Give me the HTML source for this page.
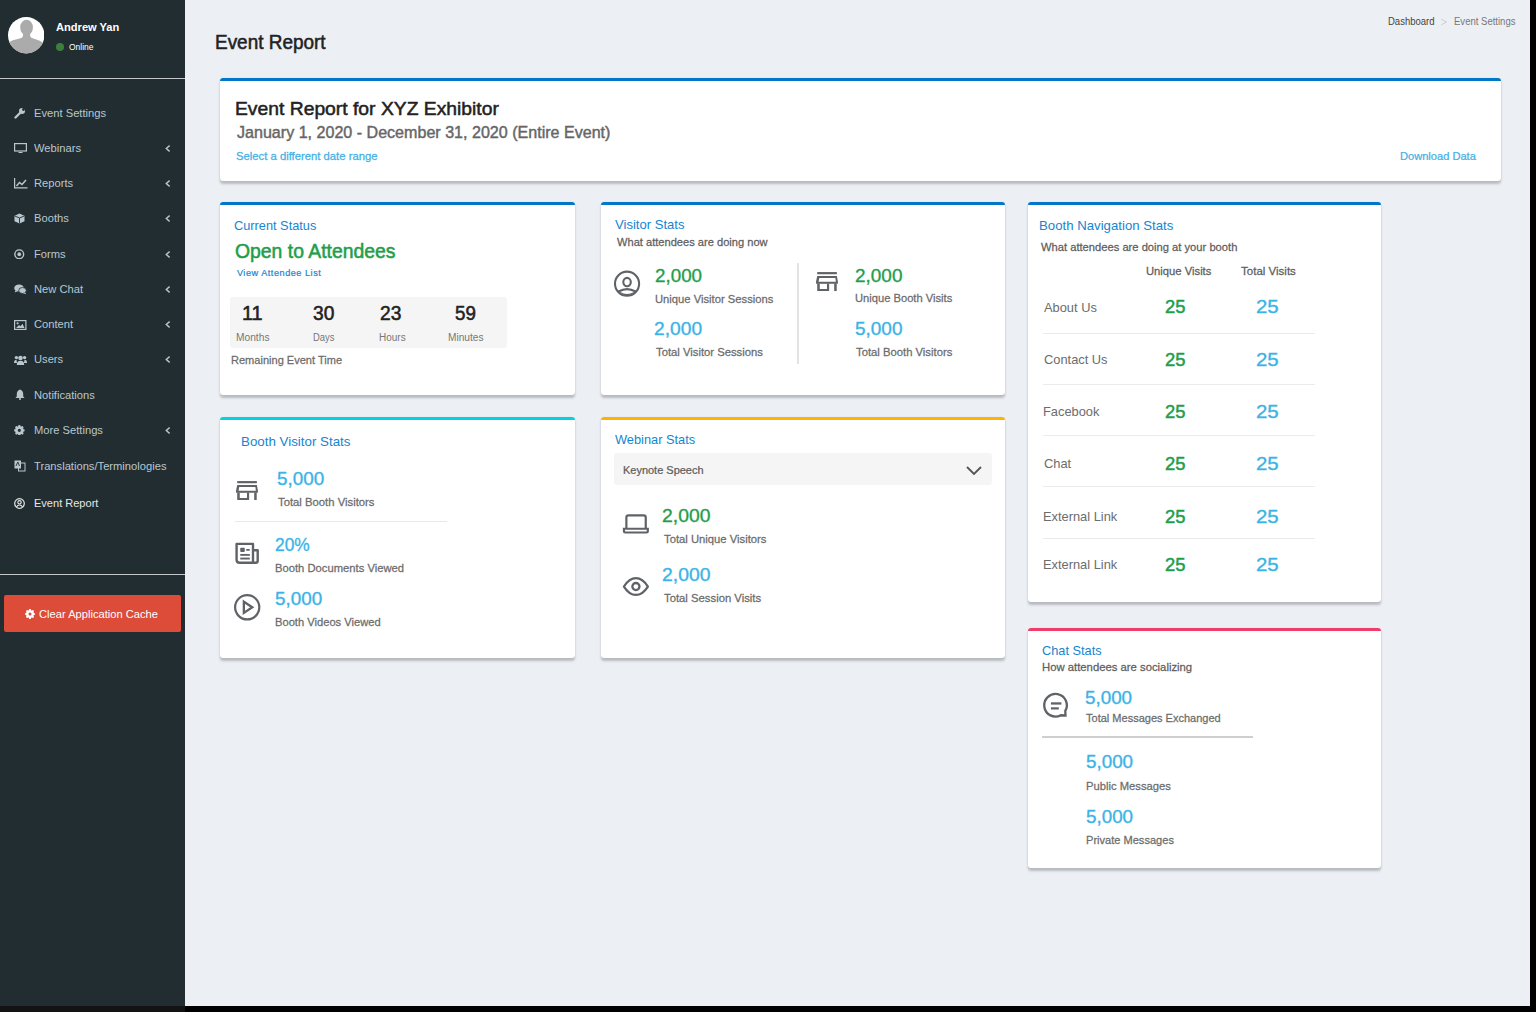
<!DOCTYPE html>
<html><head><meta charset="utf-8"><title>Event Report</title>
<style>
html,body{margin:0;padding:0;width:1536px;height:1012px;overflow:hidden;background:#000;}
body{position:relative;font-family:"Liberation Sans",sans-serif;}
.t{position:absolute;white-space:nowrap;transform-origin:0 0;}
.card{position:absolute;background:#fff;border-radius:3px;box-shadow:0 0 1px rgba(0,0,0,.12),0 2.5px 2.5px rgba(0,0,0,.22);overflow:hidden;}
.cb{position:absolute;left:0;top:0;right:0;height:3.4px;}
</style></head><body>
<div style="position:absolute;left:0;top:0;width:1536px;height:1012px;background:#000"></div>
<div style="position:absolute;left:0;top:1006px;width:185px;height:6px;background:#131313"></div>
<div style="position:absolute;left:185px;top:0;width:1345px;height:1006px;background:#ecf0f5"></div>
<div style="position:absolute;left:0;top:0;width:185px;height:1006px;background:#222d32"></div>
<div style="position:absolute;left:0;top:78px;width:185px;height:1px;background:#c3c6c8"></div>
<div style="position:absolute;left:0;top:574px;width:185px;height:1px;background:#c3c6c8"></div>
<svg style="position:absolute;left:7.85px;top:17.3px;width:36.4px;height:36.4px;" viewBox="0 0 100 100"><defs><clipPath id="av"><circle cx="50" cy="50" r="50"/></clipPath></defs><circle cx="50" cy="50" r="50" fill="#fff"/><g clip-path="url(#av)" fill="#ababab"><ellipse cx="51" cy="29" rx="17.5" ry="21.5"/><path d="M41 40 H61 V56 H41 Z"/><path d="M0 100 V70 Q12 63 30 59.5 Q40 57.5 42 52 H60 Q62 57.5 72 60 Q90 65 100 73 V100 Z"/></g></svg>
<div style="position:absolute;left:56px;top:42.5px;width:8px;height:8px;border-radius:50%;background:#3b7f3d"></div>
<div style="position:absolute;left:3.7px;top:595px;width:177.5px;height:36.5px;background:#dd4b39;border-radius:2px"></div>
<div class="card" style="left:220px;top:78px;width:1281px;height:102.5px"><div class="cb" style="background:#0277c8"></div></div>
<div class="card" style="left:220px;top:202px;width:355px;height:193px"><div class="cb" style="background:#0277c8"></div></div>
<div class="card" style="left:601px;top:202px;width:404px;height:193px"><div class="cb" style="background:#0277c8"></div></div>
<div class="card" style="left:1027.5px;top:202px;width:353.5px;height:400px"><div class="cb" style="background:#0277c8"></div></div>
<div class="card" style="left:220px;top:417px;width:354.5px;height:241px"><div class="cb" style="background:#00d3df"></div></div>
<div class="card" style="left:601px;top:417px;width:404px;height:241px"><div class="cb" style="background:#ffb300"></div></div>
<div class="card" style="left:1027.5px;top:627.5px;width:353.5px;height:240.5px"><div class="cb" style="background:#ee3d6a"></div></div>
<div style="position:absolute;left:230.3px;top:297.2px;width:276.4px;height:51.3px;background:#f5f5f5;border-radius:3px"></div>
<div style="position:absolute;left:797px;top:263px;width:2px;height:101px;background:#e3e3e3"></div>
<div style="position:absolute;left:1043.3px;top:332.6px;width:272.2px;height:1px;background:#eaebed"></div>
<div style="position:absolute;left:1043.3px;top:384.0px;width:272.2px;height:1px;background:#eaebed"></div>
<div style="position:absolute;left:1043.3px;top:434.8px;width:272.2px;height:1px;background:#eaebed"></div>
<div style="position:absolute;left:1043.3px;top:486.2px;width:272.2px;height:1px;background:#eaebed"></div>
<div style="position:absolute;left:1043.3px;top:538.1px;width:272.2px;height:1px;background:#eaebed"></div>
<div style="position:absolute;left:235.4px;top:520.6px;width:211.7px;height:1px;background:#e8e9eb"></div>
<div style="position:absolute;left:614px;top:453.2px;width:377.5px;height:32.2px;background:#f5f5f5;border-radius:3px"></div>
<svg style="position:absolute;left:966px;top:466px;width:16px;height:9.5px;" viewBox="0 0 16 9.5"><path d="M1 1 L8 8 L15 1" fill="none" stroke="#555" stroke-width="1.8"/></svg>
<div style="position:absolute;left:1042px;top:736.2px;width:211.3px;height:2px;background:#cfcfcf"></div>
<svg style="position:absolute;left:610px;top:267px;width:34px;height:34px;" viewBox="0 0 34 34"><circle cx="17.05" cy="16.7" r="12.05" fill="none" stroke="#5f6368" stroke-width="2.1"/><ellipse cx="17.05" cy="15.05" rx="3.75" ry="4.15" fill="none" stroke="#5f6368" stroke-width="2.1"/><defs><clipPath id="pc"><circle cx="17.05" cy="16.7" r="11.5"/></clipPath></defs><g clip-path="url(#pc)"><path d="M0 34 V23.6 H8.0 Q17.05 18.4 26.1 23.6 H34 V34 Z" fill="#5f6368"/><path d="M10.1 25.05 Q17.05 21.35 24.0 25.05 Q17.05 28.75 10.1 25.05 Z" fill="#fff"/></g></svg>
<svg style="position:absolute;left:809.75px;top:264.94px;width:34px;height:34px;" viewBox="0 0 34 34"><path fill="#5f6368" fill-rule="evenodd" d="M7.22 7.06 H26.88 V9.24 H7.22 Z"/><path fill="#5f6368" fill-rule="evenodd" d="M7.22 10.92 H26.88 L27.9 16.6 V18.65 H6.05 V16.6 Z M9.24 12.94 L8.57 16.63 H25.87 L25.37 12.94 Z"/><path fill="#5f6368" fill-rule="evenodd" d="M7.22 18.4 H19.15 V26.04 H7.22 Z M9.74 18.65 V24.03 H16.97 V18.65 Z"/><path fill="#5f6368" fill-rule="evenodd" d="M24.19 18.4 H26.71 V26.04 H24.19 Z"/></svg>
<svg style="position:absolute;left:230.35px;top:473.54px;width:34px;height:34px;" viewBox="0 0 34 34"><path fill="#5f6368" fill-rule="evenodd" d="M7.22 7.06 H26.88 V9.24 H7.22 Z"/><path fill="#5f6368" fill-rule="evenodd" d="M7.22 10.92 H26.88 L27.9 16.6 V18.65 H6.05 V16.6 Z M9.24 12.94 L8.57 16.63 H25.87 L25.37 12.94 Z"/><path fill="#5f6368" fill-rule="evenodd" d="M7.22 18.4 H19.15 V26.04 H7.22 Z M9.74 18.65 V24.03 H16.97 V18.65 Z"/><path fill="#5f6368" fill-rule="evenodd" d="M24.19 18.4 H26.71 V26.04 H24.19 Z"/></svg>
<svg style="position:absolute;left:230px;top:537px;width:34px;height:34px;" viewBox="0 0 34 34"><g fill="none" stroke="#5f6368" stroke-width="2.4" stroke-linejoin="round"><path d="M6.58 6.91 H23.0 V25.68 H9.58 Q6.58 25.68 6.58 22.68 Z"/><path d="M23.0 13.3 H27.7 V23.68 Q27.7 25.68 25.7 25.68 H23.0"/></g><g fill="#5f6368"><rect x="10.25" y="10.75" width="4.53" height="4.37" rx="0.8"/><rect x="16.13" y="12.1" width="3.7" height="1.68" rx="0.5"/><rect x="10.25" y="16.97" width="9.58" height="1.85"/><rect x="10.25" y="20.6" width="9.58" height="1.9"/></g></svg>
<svg style="position:absolute;left:230px;top:590px;width:34px;height:34px;" viewBox="0 0 34 34"><circle cx="17.2" cy="17.3" r="12.1" fill="none" stroke="#5f6368" stroke-width="2.2"/><path d="M13.85 11.7 L22.3 17.3 L13.85 22.9 Z" fill="none" stroke="#5f6368" stroke-width="2.3" stroke-linejoin="miter"/></svg>
<svg style="position:absolute;left:619px;top:507px;width:34px;height:34px;" viewBox="0 0 34 34"><g fill="none" stroke="#5f6368" stroke-width="2.2"><path d="M7.37 21.5 V10.4 Q7.37 8.37 9.4 8.37 H24.7 Q26.75 8.37 26.75 10.4 V21.5"/><path d="M4.96 21.75 H28.8 V24.1 Q28.8 25.5 27.4 25.5 H6.36 Q4.96 25.5 4.96 24.1 Z"/></g></svg>
<svg style="position:absolute;left:619px;top:570px;width:34px;height:34px;" viewBox="0 0 34 34"><path d="M4.9 16.55 C8.3 11.2 12.3 8.15 16.9 8.15 C21.5 8.15 25.5 11.2 28.9 16.55 C25.5 21.9 21.5 24.95 16.9 24.95 C12.3 24.95 8.3 21.9 4.9 16.55 Z" fill="none" stroke="#5f6368" stroke-width="2.2" stroke-linejoin="round"/><circle cx="16.9" cy="16.55" r="3.55" fill="none" stroke="#5f6368" stroke-width="2.3"/></svg>
<svg style="position:absolute;left:1038px;top:688px;width:34px;height:34px;" viewBox="0 0 34 34"><path d="M27.3 22.95 L27.5 27.5 L22.8 27.28 A11.3 11.3 0 1 1 27.3 22.95 Z" fill="none" stroke="#5f6368" stroke-width="2.3" stroke-linejoin="miter"/><rect x="12.9" y="14.3" width="10.5" height="2.3" fill="#5f6368"/><rect x="12.9" y="19.3" width="7.9" height="2.2" fill="#5f6368"/></svg>
<svg style="position:absolute;left:1440px;top:18px;width:8px;height:8px;" viewBox="0 0 8 8"><path d="M1.4 1.2 L6.4 4 L1.4 6.8" fill="none" stroke="#cdcdcd" stroke-width="1"/></svg>
<svg style="position:absolute;left:164.5px;top:144.8px;width:5.5px;height:7px;" viewBox="0 0 5.5 7"><path d="M4.6 0.6 L1.3 3.5 L4.6 6.4" fill="none" stroke="#b8c7ce" stroke-width="1.4"/></svg>
<svg style="position:absolute;left:164.5px;top:180.1px;width:5.5px;height:7px;" viewBox="0 0 5.5 7"><path d="M4.6 0.6 L1.3 3.5 L4.6 6.4" fill="none" stroke="#b8c7ce" stroke-width="1.4"/></svg>
<svg style="position:absolute;left:164.5px;top:215.3px;width:5.5px;height:7px;" viewBox="0 0 5.5 7"><path d="M4.6 0.6 L1.3 3.5 L4.6 6.4" fill="none" stroke="#b8c7ce" stroke-width="1.4"/></svg>
<svg style="position:absolute;left:164.5px;top:250.6px;width:5.5px;height:7px;" viewBox="0 0 5.5 7"><path d="M4.6 0.6 L1.3 3.5 L4.6 6.4" fill="none" stroke="#b8c7ce" stroke-width="1.4"/></svg>
<svg style="position:absolute;left:164.5px;top:285.8px;width:5.5px;height:7px;" viewBox="0 0 5.5 7"><path d="M4.6 0.6 L1.3 3.5 L4.6 6.4" fill="none" stroke="#b8c7ce" stroke-width="1.4"/></svg>
<svg style="position:absolute;left:164.5px;top:321.1px;width:5.5px;height:7px;" viewBox="0 0 5.5 7"><path d="M4.6 0.6 L1.3 3.5 L4.6 6.4" fill="none" stroke="#b8c7ce" stroke-width="1.4"/></svg>
<svg style="position:absolute;left:164.5px;top:356.3px;width:5.5px;height:7px;" viewBox="0 0 5.5 7"><path d="M4.6 0.6 L1.3 3.5 L4.6 6.4" fill="none" stroke="#b8c7ce" stroke-width="1.4"/></svg>
<svg style="position:absolute;left:164.5px;top:426.8px;width:5.5px;height:7px;" viewBox="0 0 5.5 7"><path d="M4.6 0.6 L1.3 3.5 L4.6 6.4" fill="none" stroke="#b8c7ce" stroke-width="1.4"/></svg>
<svg style="position:absolute;left:14px;top:106.5px;width:12px;height:12px;" viewBox="0 0 12 12"><path d="M1.5 10.5 L6 6" stroke="#b8c7ce" stroke-width="2.4" stroke-linecap="round"/><circle cx="8" cy="4" r="3" fill="#b8c7ce"/><circle cx="9.5" cy="2.5" r="1.4" fill="#222d32"/></svg>
<svg style="position:absolute;left:14px;top:142.5px;width:13px;height:10.5px;" viewBox="0 0 13 10.5"><rect x="0.6" y="0.6" width="11.8" height="7.4" fill="none" stroke="#b8c7ce" stroke-width="1.2"/><rect x="4.5" y="9" width="4" height="1.3" fill="#b8c7ce"/></svg>
<svg style="position:absolute;left:14px;top:178px;width:13.5px;height:10.5px;" viewBox="0 0 13.5 10.5"><path d="M0.6 0 V9.9 H13.5" fill="none" stroke="#b8c7ce" stroke-width="1.2"/><path d="M2.5 8 L5.5 4.5 L8 6.5 L12 2" fill="none" stroke="#b8c7ce" stroke-width="1.5"/></svg>
<svg style="position:absolute;left:14px;top:213px;width:11px;height:11px;" viewBox="0 0 11 11"><path d="M5.5 0.5 L10.5 2.8 V8.2 L5.5 10.5 L0.5 8.2 V2.8 Z" fill="#b8c7ce"/><path d="M0.8 3 L5.5 5 L10.2 3 M5.5 5 V10.3" stroke="#222d32" stroke-width="0.9" fill="none"/></svg>
<svg style="position:absolute;left:14px;top:248.5px;width:10.5px;height:10.5px;" viewBox="0 0 10.5 10.5"><circle cx="5.25" cy="5.25" r="4.4" fill="none" stroke="#b8c7ce" stroke-width="1.4"/><circle cx="5.25" cy="5.25" r="1.9" fill="#b8c7ce"/></svg>
<svg style="position:absolute;left:14px;top:284px;width:12.5px;height:10.5px;" viewBox="0 0 12.5 10.5"><ellipse cx="5" cy="4" rx="4.8" ry="3.6" fill="#b8c7ce"/><path d="M1.5 6 L0.8 8.5 L4 7" fill="#b8c7ce"/><ellipse cx="8.5" cy="6.5" rx="3.8" ry="3" fill="#b8c7ce" stroke="#222d32" stroke-width="0.8"/><path d="M11 8.5 L12.2 10.3 L9 9.3" fill="#b8c7ce"/></svg>
<svg style="position:absolute;left:14px;top:319.5px;width:12.5px;height:10px;" viewBox="0 0 12.5 10"><rect x="0.6" y="0.6" width="11.3" height="8.8" fill="none" stroke="#b8c7ce" stroke-width="1.2"/><circle cx="3.6" cy="3.3" r="1.1" fill="#b8c7ce"/><path d="M2 8 L5 5 L6.5 6.3 L8.5 3.8 L10.5 8 Z" fill="#b8c7ce"/></svg>
<svg style="position:absolute;left:14px;top:354.5px;width:13px;height:10.5px;" viewBox="0 0 13 10.5"><circle cx="6.5" cy="3" r="2.3" fill="#b8c7ce"/><path d="M2.8 10 Q2.8 5.8 6.5 5.8 Q10.2 5.8 10.2 10Z" fill="#b8c7ce"/><circle cx="2.4" cy="2.6" r="1.7" fill="#b8c7ce"/><circle cx="10.6" cy="2.6" r="1.7" fill="#b8c7ce"/><path d="M0 8 Q0 4.8 2.5 4.8 L3 8Z M13 8 Q13 4.8 10.5 4.8 L10 8Z" fill="#b8c7ce"/></svg>
<svg style="position:absolute;left:15px;top:389px;width:10px;height:11px;" viewBox="0 0 10 11"><path d="M5 0.5 Q8.2 1.5 8.2 5 V7.5 L9.6 9 H0.4 L1.8 7.5 V5 Q1.8 1.5 5 0.5Z" fill="#b8c7ce"/><circle cx="5" cy="10" r="1" fill="#b8c7ce"/></svg>
<svg style="position:absolute;left:13.95px;top:424.6px;width:10.7px;height:10.7px;" viewBox="0 0 10.7 10.7"><path fill="#b8c7ce" fill-rule="evenodd" d="M9.48 4.15 L10.58 4.52 L10.58 6.18 L9.48 6.55 L9.12 7.42 L9.64 8.47 L8.47 9.64 L7.42 9.12 L6.55 9.48 L6.18 10.58 L4.52 10.58 L4.15 9.48 L3.28 9.12 L2.23 9.64 L1.06 8.47 L1.58 7.42 L1.22 6.55 L0.12 6.18 L0.12 4.52 L1.22 4.15 L1.58 3.28 L1.06 2.23 L2.23 1.06 L3.28 1.58 L4.15 1.22 L4.52 0.12 L6.18 0.12 L6.55 1.22 L7.42 1.58 L8.47 1.06 L9.64 2.23 L9.12 3.28 Z M6.95 5.35 A1.6 1.6 0 1 0 3.75 5.35 A1.6 1.6 0 1 0 6.95 5.35 Z"/></svg>
<svg style="position:absolute;left:14px;top:460px;width:11.5px;height:11.5px;" viewBox="0 0 11.5 11.5"><rect x="0.5" y="0.5" width="6.5" height="8" fill="#b8c7ce"/><rect x="4.5" y="3" width="6.5" height="8" fill="none" stroke="#b8c7ce" stroke-width="1"/><path d="M2 6 L3.8 2 L5.5 6" stroke="#222d32" stroke-width="0.9" fill="none"/></svg>
<svg style="position:absolute;left:13.8px;top:497.5px;width:11px;height:11px;" viewBox="0 0 11 11"><circle cx="5.5" cy="5.5" r="4.8" fill="none" stroke="#e6e6e6" stroke-width="1.2"/><circle cx="5.5" cy="4.3" r="1.7" fill="none" stroke="#e6e6e6" stroke-width="1.1"/><path d="M2.5 9 Q3.5 7 5.5 7 Q7.5 7 8.5 9" fill="none" stroke="#e6e6e6" stroke-width="1.1"/></svg>
<svg style="position:absolute;left:25.4px;top:609.2px;width:10px;height:10px;" viewBox="0 0 10 10"><path fill="#fff" fill-rule="evenodd" d="M8.84 3.88 L9.94 4.22 L9.94 5.78 L8.84 6.12 L8.51 6.93 L9.05 7.94 L7.94 9.05 L6.93 8.51 L6.12 8.84 L5.78 9.94 L4.22 9.94 L3.88 8.84 L3.07 8.51 L2.06 9.05 L0.95 7.94 L1.49 6.93 L1.16 6.12 L0.06 5.78 L0.06 4.22 L1.16 3.88 L1.49 3.07 L0.95 2.06 L2.06 0.95 L3.07 1.49 L3.88 1.16 L4.22 0.06 L5.78 0.06 L6.12 1.16 L6.93 1.49 L7.94 0.95 L9.05 2.06 L8.51 3.07 Z M6.50 5.00 A1.5 1.5 0 1 0 3.50 5.00 A1.5 1.5 0 1 0 6.50 5.00 Z"/></svg>
<div id="t0" class="t" style="left:56.28px;top:22.40px;font-size:11.45px;line-height:11.45px;color:#fff;font-weight:bold;transform:scaleX(0.9699);">Andrew Yan</div>
<div id="t1" class="t" style="left:69.00px;top:42.90px;font-size:9.13px;line-height:9.13px;color:#fff;font-weight:normal;transform:scaleX(0.9259);">Online</div>
<div id="t2" class="t" style="left:34.10px;top:107.70px;font-size:11.59px;line-height:11.59px;color:#b8c7ce;font-weight:normal;transform:scaleX(0.9655);">Event Settings</div>
<div id="t3" class="t" style="left:34.10px;top:142.90px;font-size:11.59px;line-height:11.59px;color:#b8c7ce;font-weight:normal;transform:scaleX(0.9652);">Webinars</div>
<div id="t4" class="t" style="left:34.10px;top:178.20px;font-size:11.59px;line-height:11.59px;color:#b8c7ce;font-weight:normal;transform:scaleX(0.9652);">Reports</div>
<div id="t5" class="t" style="left:34.10px;top:213.40px;font-size:11.59px;line-height:11.59px;color:#b8c7ce;font-weight:normal;transform:scaleX(0.9652);">Booths</div>
<div id="t6" class="t" style="left:34.10px;top:248.70px;font-size:11.59px;line-height:11.59px;color:#b8c7ce;font-weight:normal;transform:scaleX(0.9652);">Forms</div>
<div id="t7" class="t" style="left:34.10px;top:283.90px;font-size:11.59px;line-height:11.59px;color:#b8c7ce;font-weight:normal;transform:scaleX(0.9652);">New Chat</div>
<div id="t8" class="t" style="left:34.10px;top:319.20px;font-size:11.59px;line-height:11.59px;color:#b8c7ce;font-weight:normal;transform:scaleX(0.9652);">Content</div>
<div id="t9" class="t" style="left:34.10px;top:354.40px;font-size:11.59px;line-height:11.59px;color:#b8c7ce;font-weight:normal;transform:scaleX(0.9652);">Users</div>
<div id="t10" class="t" style="left:34.10px;top:389.70px;font-size:11.59px;line-height:11.59px;color:#b8c7ce;font-weight:normal;transform:scaleX(0.9652);">Notifications</div>
<div id="t11" class="t" style="left:34.10px;top:424.90px;font-size:11.59px;line-height:11.59px;color:#b8c7ce;font-weight:normal;transform:scaleX(0.9652);">More Settings</div>
<div id="t12" class="t" style="left:34.10px;top:460.50px;font-size:11.59px;line-height:11.59px;color:#b8c7ce;font-weight:normal;transform:scaleX(0.9650);">Translations/Terminologies</div>
<div id="t13" class="t" style="left:33.91px;top:498.20px;font-size:11.3px;line-height:11.3px;color:#e6e6e6;font-weight:normal;transform:scaleX(0.9763);">Event Report</div>
<div id="t14" class="t" style="left:39.00px;top:609.10px;font-size:11.59px;line-height:11.59px;color:#fff;font-weight:normal;transform:scaleX(0.9630);">Clear Application Cache</div>
<div id="t15" class="t" style="left:215.13px;top:32.90px;font-size:19.57px;line-height:19.57px;color:#222;font-weight:normal;transform:scaleX(0.9685);-webkit-text-stroke:0.528px #222;">Event Report</div>
<div id="t16" class="t" style="left:1388.00px;top:16.60px;font-size:10.0px;line-height:10.0px;color:#444;font-weight:normal;transform:scaleX(0.9513);">Dashboard</div>
<div id="t17" class="t" style="left:1453.82px;top:16.60px;font-size:10.0px;line-height:10.0px;color:#777;font-weight:normal;transform:scaleX(0.9534);">Event Settings</div>
<div id="t18" class="t" style="left:234.99px;top:98.70px;font-size:19.13px;line-height:19.13px;color:#222;font-weight:normal;transform:scaleX(1.0100);-webkit-text-stroke:0.517px #222;">Event Report for XYZ Exhibitor</div>
<div id="t19" class="t" style="left:236.51px;top:124.90px;font-size:15.65px;line-height:15.65px;color:#666;font-weight:normal;transform:scaleX(1.0275);-webkit-text-stroke:0.423px #666;">January 1, 2020 - December 31, 2020 (Entire Event)</div>
<div id="t20" class="t" style="left:236.00px;top:150.70px;font-size:11.45px;line-height:11.45px;color:#45b0e4;font-weight:normal;transform:scaleX(0.9861);-webkit-text-stroke:0.252px #45b0e4;">Select a different date range</div>
<div id="t21" class="t" style="left:1400.30px;top:150.70px;font-size:11.3px;line-height:11.3px;color:#45b0e4;font-weight:normal;transform:scaleX(0.9822);-webkit-text-stroke:0.249px #45b0e4;">Download Data</div>
<div id="t22" class="t" style="left:233.89px;top:219.70px;font-size:12.9px;line-height:12.9px;color:#1585cf;font-weight:normal;transform:scaleX(0.9905);">Current Status</div>
<div id="t23" class="t" style="left:234.60px;top:241.50px;font-size:19.57px;line-height:19.57px;color:#1f9e4a;font-weight:normal;transform:scaleX(0.9901);-webkit-text-stroke:0.528px #1f9e4a;">Open to Attendees</div>
<div id="t24" class="t" style="left:236.90px;top:268.90px;font-size:9.13px;line-height:9.13px;color:#1585cf;font-weight:normal;letter-spacing:0.529px;-webkit-text-stroke:0.201px #1585cf;">View Attendee List</div>
<div id="t25" class="t" style="left:241.57px;top:303.60px;font-size:19.71px;line-height:19.71px;color:#222;font-weight:normal;transform:scaleX(1.0129);-webkit-text-stroke:0.532px #222;">11</div>
<div id="t26" class="t" style="left:313.20px;top:303.60px;font-size:19.71px;line-height:19.71px;color:#222;font-weight:normal;transform:scaleX(0.9743);-webkit-text-stroke:0.532px #222;">30</div>
<div id="t27" class="t" style="left:380.29px;top:303.60px;font-size:19.71px;line-height:19.71px;color:#222;font-weight:normal;transform:scaleX(0.9743);-webkit-text-stroke:0.532px #222;">23</div>
<div id="t28" class="t" style="left:455.00px;top:303.60px;font-size:19.71px;line-height:19.71px;color:#222;font-weight:normal;transform:scaleX(0.9545);-webkit-text-stroke:0.532px #222;">59</div>
<div id="t29" class="t" style="left:236.29px;top:331.60px;font-size:10.58px;line-height:10.58px;color:#777;font-weight:normal;transform:scaleX(0.9656);">Months</div>
<div id="t30" class="t" style="left:312.85px;top:331.60px;font-size:10.58px;line-height:10.58px;color:#777;font-weight:normal;transform:scaleX(0.8895);">Days</div>
<div id="t31" class="t" style="left:379.12px;top:331.60px;font-size:10.58px;line-height:10.58px;color:#777;font-weight:normal;transform:scaleX(0.9435);">Hours</div>
<div id="t32" class="t" style="left:448.21px;top:331.60px;font-size:10.58px;line-height:10.58px;color:#777;font-weight:normal;transform:scaleX(0.9571);">Minutes</div>
<div id="t33" class="t" style="left:231.00px;top:353.60px;font-size:11.74px;line-height:11.74px;color:#6c6c6c;font-weight:normal;transform:scaleX(0.9407);-webkit-text-stroke:0.258px #6c6c6c;">Remaining Event Time</div>
<div id="t34" class="t" style="left:615.20px;top:219.40px;font-size:12.9px;line-height:12.9px;color:#1585cf;font-weight:normal;transform:scaleX(1.0145);">Visitor Stats</div>
<div id="t35" class="t" style="left:616.97px;top:237.40px;font-size:11.45px;line-height:11.45px;color:#5e5e5e;font-weight:normal;transform:scaleX(0.9707);-webkit-text-stroke:0.252px #5e5e5e;">What attendees are doing now</div>
<div id="t36" class="t" style="left:655.19px;top:265.50px;font-size:19.13px;line-height:19.13px;color:#1f9e4a;font-weight:normal;transform:scaleX(0.9837);-webkit-text-stroke:0.344px #1f9e4a;">2,000</div>
<div id="t37" class="t" style="left:655.20px;top:293.50px;font-size:11.45px;line-height:11.45px;color:#6c6c6c;font-weight:normal;transform:scaleX(0.9819);-webkit-text-stroke:0.252px #6c6c6c;">Unique Visitor Sessions</div>
<div id="t38" class="t" style="left:654.16px;top:318.90px;font-size:19.13px;line-height:19.13px;color:#3bb3e6;font-weight:normal;transform:scaleX(1.0051);-webkit-text-stroke:0.344px #3bb3e6;">2,000</div>
<div id="t39" class="t" style="left:656.19px;top:347.20px;font-size:11.45px;line-height:11.45px;color:#6c6c6c;font-weight:normal;transform:scaleX(0.9855);-webkit-text-stroke:0.252px #6c6c6c;">Total Visitor Sessions</div>
<div id="t40" class="t" style="left:855.00px;top:265.70px;font-size:19.13px;line-height:19.13px;color:#1f9e4a;font-weight:normal;transform:scaleX(0.9919);-webkit-text-stroke:0.344px #1f9e4a;">2,000</div>
<div id="t41" class="t" style="left:855.00px;top:293.20px;font-size:11.45px;line-height:11.45px;color:#6c6c6c;font-weight:normal;transform:scaleX(0.9761);-webkit-text-stroke:0.252px #6c6c6c;">Unique Booth Visits</div>
<div id="t42" class="t" style="left:854.95px;top:319.10px;font-size:19.13px;line-height:19.13px;color:#3bb3e6;font-weight:normal;transform:scaleX(0.9928);-webkit-text-stroke:0.344px #3bb3e6;">5,000</div>
<div id="t43" class="t" style="left:855.99px;top:346.90px;font-size:11.45px;line-height:11.45px;color:#6c6c6c;font-weight:normal;transform:scaleX(0.9859);-webkit-text-stroke:0.252px #6c6c6c;">Total Booth Visitors</div>
<div id="t44" class="t" style="left:1039.29px;top:219.50px;font-size:12.9px;line-height:12.9px;color:#1585cf;font-weight:normal;transform:scaleX(1.0245);">Booth Navigation Stats</div>
<div id="t45" class="t" style="left:1041.28px;top:241.60px;font-size:11.45px;line-height:11.45px;color:#5e5e5e;font-weight:normal;transform:scaleX(0.9772);-webkit-text-stroke:0.252px #5e5e5e;">What attendees are doing at your booth</div>
<div id="t46" class="t" style="left:1146.41px;top:266.40px;font-size:11.45px;line-height:11.45px;color:#5e5e5e;font-weight:normal;transform:scaleX(0.9823);-webkit-text-stroke:0.252px #5e5e5e;">Unique Visits</div>
<div id="t47" class="t" style="left:1240.59px;top:266.40px;font-size:11.45px;line-height:11.45px;color:#5e5e5e;font-weight:normal;transform:scaleX(1.0079);-webkit-text-stroke:0.252px #5e5e5e;">Total Visits</div>
<div id="t48" class="t" style="left:1043.68px;top:300.60px;font-size:13.33px;line-height:13.33px;color:#6c6c6c;font-weight:normal;transform:scaleX(0.9640);">About Us</div>
<div id="t49" class="t" style="left:1165.09px;top:297.30px;font-size:19.28px;line-height:19.28px;color:#1f9e4a;font-weight:normal;transform:scaleX(0.9545);-webkit-text-stroke:0.521px #1f9e4a;">25</div>
<div id="t50" class="t" style="left:1256.17px;top:297.30px;font-size:19.28px;line-height:19.28px;color:#3bb3e6;font-weight:normal;transform:scaleX(1.0596);-webkit-text-stroke:0.347px #3bb3e6;">25</div>
<div id="t51" class="t" style="left:1043.69px;top:352.90px;font-size:13.33px;line-height:13.33px;color:#6c6c6c;font-weight:normal;transform:scaleX(0.9638);">Contact Us</div>
<div id="t52" class="t" style="left:1165.09px;top:349.60px;font-size:19.28px;line-height:19.28px;color:#1f9e4a;font-weight:normal;transform:scaleX(0.9545);-webkit-text-stroke:0.521px #1f9e4a;">25</div>
<div id="t53" class="t" style="left:1256.17px;top:349.60px;font-size:19.28px;line-height:19.28px;color:#3bb3e6;font-weight:normal;transform:scaleX(1.0596);-webkit-text-stroke:0.347px #3bb3e6;">25</div>
<div id="t54" class="t" style="left:1042.73px;top:405.00px;font-size:13.33px;line-height:13.33px;color:#6c6c6c;font-weight:normal;transform:scaleX(0.9638);">Facebook</div>
<div id="t55" class="t" style="left:1165.09px;top:401.70px;font-size:19.28px;line-height:19.28px;color:#1f9e4a;font-weight:normal;transform:scaleX(0.9545);-webkit-text-stroke:0.521px #1f9e4a;">25</div>
<div id="t56" class="t" style="left:1256.17px;top:401.70px;font-size:19.28px;line-height:19.28px;color:#3bb3e6;font-weight:normal;transform:scaleX(1.0596);-webkit-text-stroke:0.347px #3bb3e6;">25</div>
<div id="t57" class="t" style="left:1043.69px;top:457.20px;font-size:13.33px;line-height:13.33px;color:#6c6c6c;font-weight:normal;transform:scaleX(0.9638);">Chat</div>
<div id="t58" class="t" style="left:1165.09px;top:453.90px;font-size:19.28px;line-height:19.28px;color:#1f9e4a;font-weight:normal;transform:scaleX(0.9545);-webkit-text-stroke:0.521px #1f9e4a;">25</div>
<div id="t59" class="t" style="left:1256.17px;top:453.90px;font-size:19.28px;line-height:19.28px;color:#3bb3e6;font-weight:normal;transform:scaleX(1.0596);-webkit-text-stroke:0.347px #3bb3e6;">25</div>
<div id="t60" class="t" style="left:1042.72px;top:509.90px;font-size:13.33px;line-height:13.33px;color:#6c6c6c;font-weight:normal;transform:scaleX(0.9637);">External Link</div>
<div id="t61" class="t" style="left:1165.09px;top:506.60px;font-size:19.28px;line-height:19.28px;color:#1f9e4a;font-weight:normal;transform:scaleX(0.9545);-webkit-text-stroke:0.521px #1f9e4a;">25</div>
<div id="t62" class="t" style="left:1256.17px;top:506.60px;font-size:19.28px;line-height:19.28px;color:#3bb3e6;font-weight:normal;transform:scaleX(1.0596);-webkit-text-stroke:0.347px #3bb3e6;">25</div>
<div id="t63" class="t" style="left:1042.72px;top:558.40px;font-size:13.33px;line-height:13.33px;color:#6c6c6c;font-weight:normal;transform:scaleX(0.9637);">External Link</div>
<div id="t64" class="t" style="left:1165.09px;top:555.10px;font-size:19.28px;line-height:19.28px;color:#1f9e4a;font-weight:normal;transform:scaleX(0.9545);-webkit-text-stroke:0.521px #1f9e4a;">25</div>
<div id="t65" class="t" style="left:1256.17px;top:555.10px;font-size:19.28px;line-height:19.28px;color:#3bb3e6;font-weight:normal;transform:scaleX(1.0596);-webkit-text-stroke:0.347px #3bb3e6;">25</div>
<div id="t66" class="t" style="left:240.97px;top:436.20px;font-size:12.9px;line-height:12.9px;color:#1585cf;font-weight:normal;transform:scaleX(1.0343);">Booth Visitor Stats</div>
<div id="t67" class="t" style="left:277.07px;top:468.80px;font-size:19.13px;line-height:19.13px;color:#3bb3e6;font-weight:normal;transform:scaleX(0.9883);-webkit-text-stroke:0.344px #3bb3e6;">5,000</div>
<div id="t68" class="t" style="left:278.09px;top:496.50px;font-size:11.45px;line-height:11.45px;color:#6c6c6c;font-weight:normal;transform:scaleX(0.9880);-webkit-text-stroke:0.252px #6c6c6c;">Total Booth Visitors</div>
<div id="t69" class="t" style="left:275.18px;top:535.20px;font-size:19.13px;line-height:19.13px;color:#3bb3e6;font-weight:normal;transform:scaleX(0.9069);-webkit-text-stroke:0.344px #3bb3e6;">20%</div>
<div id="t70" class="t" style="left:275.20px;top:563.00px;font-size:11.45px;line-height:11.45px;color:#6c6c6c;font-weight:normal;transform:scaleX(0.9818);-webkit-text-stroke:0.252px #6c6c6c;">Booth Documents Viewed</div>
<div id="t71" class="t" style="left:275.20px;top:588.60px;font-size:19.13px;line-height:19.13px;color:#3bb3e6;font-weight:normal;transform:scaleX(0.9877);-webkit-text-stroke:0.344px #3bb3e6;">5,000</div>
<div id="t72" class="t" style="left:275.20px;top:617.00px;font-size:11.45px;line-height:11.45px;color:#6c6c6c;font-weight:normal;transform:scaleX(0.9760);-webkit-text-stroke:0.252px #6c6c6c;">Booth Videos Viewed</div>
<div id="t73" class="t" style="left:615.20px;top:434.30px;font-size:12.9px;line-height:12.9px;color:#1585cf;font-weight:normal;transform:scaleX(0.9927);">Webinar Stats</div>
<div id="t74" class="t" style="left:623.20px;top:465.20px;font-size:11.3px;line-height:11.3px;color:#5e5e5e;font-weight:normal;transform:scaleX(0.9712);-webkit-text-stroke:0.249px #5e5e5e;">Keynote Speech</div>
<div id="t75" class="t" style="left:662.20px;top:505.70px;font-size:19.13px;line-height:19.13px;color:#1f9e4a;font-weight:normal;transform:scaleX(1.0131);-webkit-text-stroke:0.344px #1f9e4a;">2,000</div>
<div id="t76" class="t" style="left:664.19px;top:533.70px;font-size:11.45px;line-height:11.45px;color:#6c6c6c;font-weight:normal;transform:scaleX(0.9848);-webkit-text-stroke:0.252px #6c6c6c;">Total Unique Visitors</div>
<div id="t77" class="t" style="left:662.18px;top:564.90px;font-size:19.13px;line-height:19.13px;color:#3bb3e6;font-weight:normal;transform:scaleX(1.0131);-webkit-text-stroke:0.344px #3bb3e6;">2,000</div>
<div id="t78" class="t" style="left:664.19px;top:592.90px;font-size:11.45px;line-height:11.45px;color:#6c6c6c;font-weight:normal;transform:scaleX(0.9880);-webkit-text-stroke:0.252px #6c6c6c;">Total Session Visits</div>
<div id="t79" class="t" style="left:1042.39px;top:645.00px;font-size:12.9px;line-height:12.9px;color:#1585cf;font-weight:normal;transform:scaleX(0.9901);">Chat Stats</div>
<div id="t80" class="t" style="left:1042.41px;top:661.90px;font-size:11.45px;line-height:11.45px;color:#5e5e5e;font-weight:normal;transform:scaleX(0.9882);-webkit-text-stroke:0.252px #5e5e5e;">How attendees are socializing</div>
<div id="t81" class="t" style="left:1085.16px;top:688.10px;font-size:19.13px;line-height:19.13px;color:#3bb3e6;font-weight:normal;transform:scaleX(0.9846);-webkit-text-stroke:0.344px #3bb3e6;">5,000</div>
<div id="t82" class="t" style="left:1086.17px;top:713.40px;font-size:11.45px;line-height:11.45px;color:#6c6c6c;font-weight:normal;transform:scaleX(0.9631);-webkit-text-stroke:0.252px #6c6c6c;">Total Messages Exchanged</div>
<div id="t83" class="t" style="left:1085.53px;top:751.60px;font-size:19.13px;line-height:19.13px;color:#3bb3e6;font-weight:normal;transform:scaleX(0.9846);-webkit-text-stroke:0.344px #3bb3e6;">5,000</div>
<div id="t84" class="t" style="left:1085.61px;top:781.40px;font-size:11.45px;line-height:11.45px;color:#6c6c6c;font-weight:normal;transform:scaleX(0.9815);-webkit-text-stroke:0.252px #6c6c6c;">Public Messages</div>
<div id="t85" class="t" style="left:1085.53px;top:807.00px;font-size:19.13px;line-height:19.13px;color:#3bb3e6;font-weight:normal;transform:scaleX(0.9846);-webkit-text-stroke:0.344px #3bb3e6;">5,000</div>
<div id="t86" class="t" style="left:1085.62px;top:835.10px;font-size:11.45px;line-height:11.45px;color:#6c6c6c;font-weight:normal;transform:scaleX(0.9672);-webkit-text-stroke:0.252px #6c6c6c;">Private Messages</div>
</body></html>
